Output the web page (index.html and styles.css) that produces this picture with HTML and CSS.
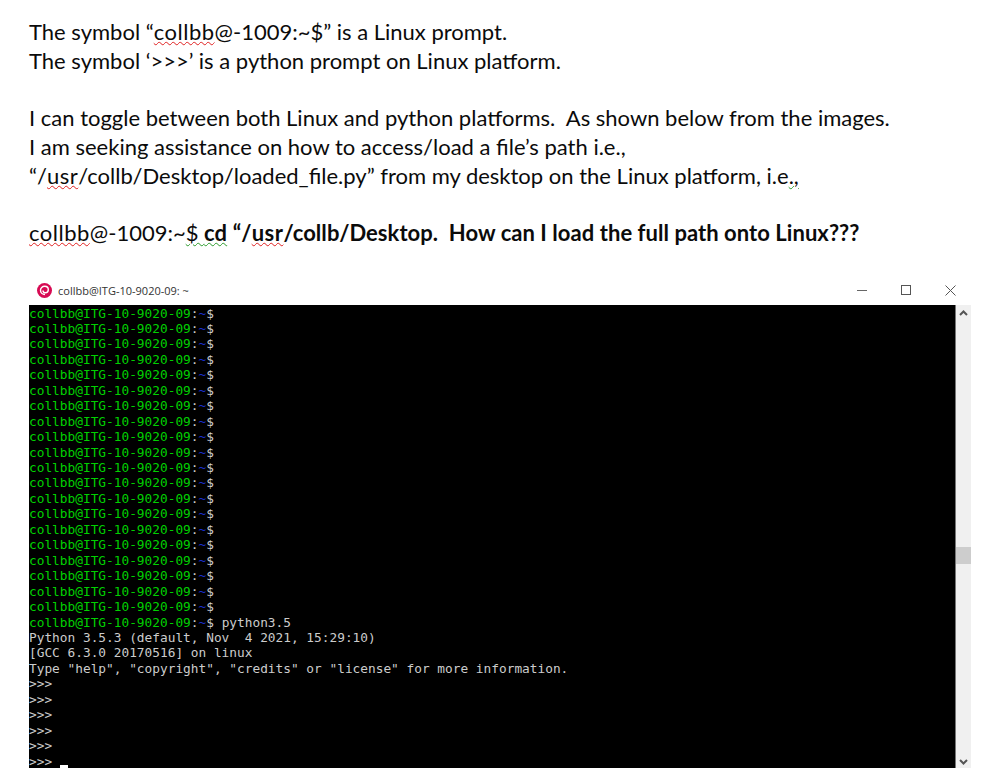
FILE: index.html
```html
<!DOCTYPE html>
<html lang="en">

<head>
  <meta charset="UTF-8">
  <title>Linux prompt question</title>
  <link rel="stylesheet" href="styles.css">
</head>

<body>
  <main class="note">
    <div class="line">The symbol “<span class="typo">collbb</span>@-1009:~$” is a Linux prompt.</div>
    <div class="line">The symbol ‘&gt;&gt;&gt;’ is a python prompt on Linux platform.</div>
    <div class="line">&nbsp;</div>
    <div class="line">I can toggle between both Linux and python platforms.&nbsp; As shown below from the images.</div>
    <div class="line">I am seeking assistance on how to access/load a file’s path i.e.,</div>
    <div class="line">“/<span class="typo">usr</span>/collb/Desktop/loaded_file.py” from my desktop on the Linux platform, <span>i.e<span class="grammar">.,</span></span></div>
    <div class="line">&nbsp;</div>
    <div class="line"><span class="typo">collbb</span>@-1009:~<span class="grammar">$ <b>cd</b></span> <b>“/<span class="typo">usr</span>/collb/Desktop.&nbsp; How can I load the full path onto Linux???</b></div>
  </main>

  <section class="window">
    <header class="titlebar">
      <svg class="logo" width="15" height="15" viewBox="0 0 15 15">
        <circle cx="7.5" cy="7.5" r="7.5" fill="#d70a53"/>
        <path d="M8 11.5C5.5 11.5 3.5 9.7 3.5 7.3C3.5 5 5.3 3.3 7.7 3.3C9.8 3.3 11.3 4.8 11.3 6.8C11.3 8.5 10 9.7 8.4 9.7C7 9.7 6 8.8 6 7.5" fill="none" stroke="#fff" stroke-width="1.4"/>
      </svg>
      <span class="title">collbb@ITG-10-9020-09: ~</span>
      <div class="controls">
        <svg width="11" height="11" viewBox="0 0 11 11"><path d="M0 5.5H10" stroke="#666" stroke-width="1"/></svg>
        <svg width="11" height="11" viewBox="0 0 11 11"><rect x=".5" y=".5" width="9" height="9" fill="none" stroke="#555"/></svg>
        <svg width="11" height="11" viewBox="0 0 11 11"><path d="M.5 .5L10.5 10.5M10.5 .5L.5 10.5" stroke="#555"/></svg>
      </div>
    </header>
    <div class="console">
      <pre class="terminal" id="terminal"></pre>
      <div class="scrollbar">
        <svg class="arrow" width="9" height="6" viewBox="0 0 9 6"><path d="M1 5L4.5 1.5L8 5" fill="none" stroke="#555" stroke-width="2"/></svg>
        <div class="thumb"></div>
        <svg class="arrow" width="9" height="6" viewBox="0 0 9 6"><path d="M1 1L4.5 4.5L8 1" fill="none" stroke="#555" stroke-width="2"/></svg>
      </div>
    </div>
  </section>

  <script>
    const prompt = '<span class="user">collbb@ITG-10-9020-09</span>:<span class="dir">~</span>$'
    const lines = []
    for (let i = 0; i < 20; i++) lines.push(prompt)
    lines.push(prompt + ' python3.5')
    lines.push('Python 3.5.3 (default, Nov  4 2021, 15:29:10)')
    lines.push('[GCC 6.3.0 20170516] on linux')
    lines.push('Type "help", "copyright", "credits" or "license" for more information.')
    for (let i = 0; i < 5; i++) lines.push('&gt;&gt;&gt;')
    lines.push('&gt;&gt;&gt; <span class="cursor"> </span>')
    document.getElementById('terminal').innerHTML = lines.join('\n')
  </script>
</body>

</html>
```

FILE: styles.css
```css
*,
*::before,
*::after {
  box-sizing: border-box;
}
html,
body {
  height: 100%;
}
body {
  margin: 0;
  background: #fff;
  color: #0b0b0b;
}
.note {
  height: 275px;
  padding: 18.4px 0 0 29px;
  font-family: Lato, "Liberation Sans", sans-serif;
  font-size: 22px;
  line-height: 28.67px;
  white-space: nowrap;
}
.note b {
  font-weight: 700;
  letter-spacing: .05px;
}
.typo {
  letter-spacing: .5px;
  text-decoration: underline wavy #e02020 1px;
  text-underline-offset: 1px;
}
.grammar {
  text-decoration: underline wavy #2a9a2a 1px;
  text-underline-offset: 1px;
}
.window {
  width: 942px;
  margin-left: 29px;
}
.titlebar {
  display: flex;
  align-items: center;
  height: 30px;
  padding: 0 15px 0 8px;
}
.title {
  margin-left: 6px;
  font-family: "Open Sans", sans-serif;
  font-size: 11px;
  color: #333;
}
.controls {
  display: flex;
  gap: 33px;
  margin-left: auto;
}
.console {
  display: flex;
  height: 463px;
}
.terminal {
  flex: 1;
  margin: 0;
  padding: .5px 0 0;
  overflow: hidden;
  background: #000;
  border-right: 1px solid #777;
  color: #ccc;
  font-family: "DejaVu Sans Mono", monospace;
  font-size: 12.8px;
  line-height: 15.45px;
}
.user {
  color: #00d000;
}
.dir {
  color: #1a2fd0;
}
.cursor {
  display: inline-block;
  width: 8px;
  height: 15px;
  background: #fff;
  vertical-align: top;
  margin-top: 11px;
}
.scrollbar {
  display: flex;
  flex-direction: column;
  align-items: center;
  position: relative;
  width: 15px;
  background: #f0f0f0;
  padding: 5px 0 3px;
}
.arrow:last-child {
  margin-top: auto;
}
.thumb {
  position: absolute;
  top: 242px;
  left: 0;
  width: 100%;
  height: 17px;
  background: #cdcdcd;
}
```
